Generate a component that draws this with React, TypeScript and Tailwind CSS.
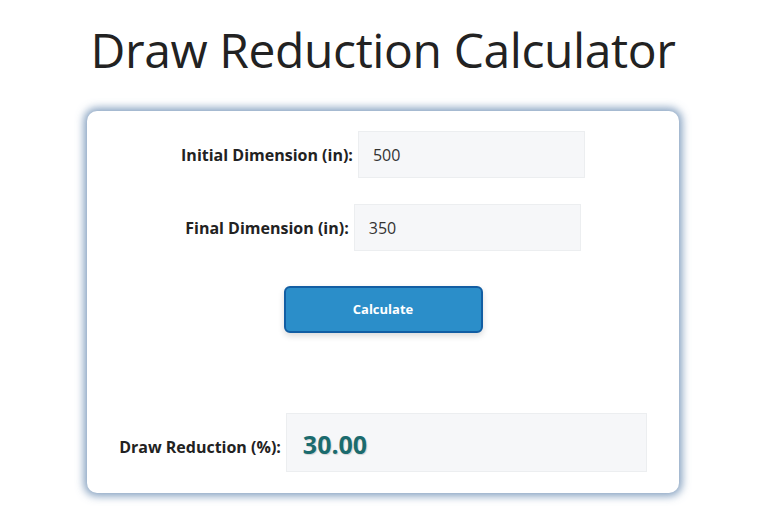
import React from "react";

export default function App() {
  return (
    <div
      className="min-h-[527px] w-[766px] bg-white text-[#222]"
      style={{ fontFamily: '"Open Sans", "Noto Sans", sans-serif' }}
    >
      <h1 className="pt-[18px] text-center text-[48px] font-normal leading-[64px] tracking-[-0.4px] text-[#222]">
        Draw Reduction Calculator
      </h1>
      <div className="mx-auto mt-[29px] flex h-[382px] w-[592px] flex-col items-center rounded-[10px] bg-white pt-[20px] shadow-[0_0_8px_3px_rgba(100,135,175,0.8)]">
        <div className="flex items-center gap-[5px]">
          <label className="text-[16px] font-bold text-[#222]">Initial Dimension (in):</label>
          <div className="flex h-[47px] w-[227px] items-center border border-[#eceef0] bg-[#f6f7f9] px-[14px] text-[16px] text-[#333]">
            500
          </div>
        </div>
        <div className="mt-[26px] flex items-center gap-[5px]">
          <label className="text-[16px] font-bold text-[#222]">Final Dimension (in):</label>
          <div className="flex h-[47px] w-[227px] items-center border border-[#eceef0] bg-[#f6f7f9] px-[14px] text-[16px] text-[#333]">
            350
          </div>
        </div>
        <button className="mt-[35px] flex h-[47px] w-[199px] items-center justify-center rounded-[6px] border-2 border-[#125ea3] bg-[#2b8ec9] text-[13px] font-bold text-white shadow-[0_3px_6px_rgba(0,0,0,0.15)]">
          Calculate
        </button>
        <div className="mt-[80px] flex items-center gap-[5px]">
          <label className="pt-[8px] text-[16px] font-bold text-[#222]">Draw Reduction (%):</label>
          <div className="flex h-[59px] w-[361px] items-center border border-[#eceef0] bg-[#f6f7f9] px-[16px] pt-[4px] text-[25px] font-bold text-[#1b6b6e] [text-shadow:1px_1px_1px_rgba(0,0,0,0.15)]">
            30.00
          </div>
        </div>
      </div>
    </div>
  );
}
